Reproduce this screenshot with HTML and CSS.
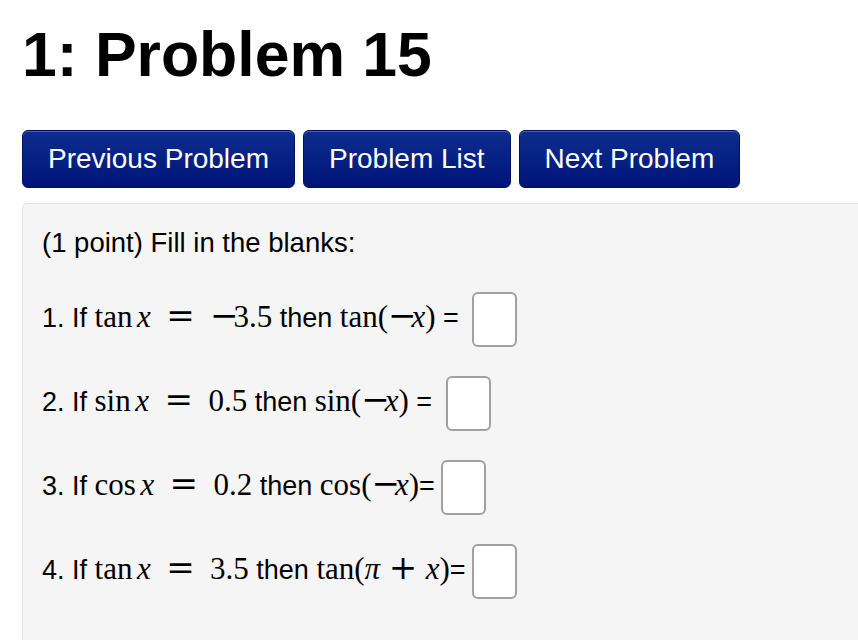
FILE: index.html
```html
<!DOCTYPE html>
<html lang="en">
<head>
    <meta charset="UTF-8">
    <meta name="viewport" content="width=device-width, initial-scale=1.0">
    <title>1: Problem 15</title>
    <link rel="stylesheet" href="styles.css">
</head>
<body>
    <h1 class="title">1: Problem 15</h1>
    <div class="nav-buttons">
        <button class="nav-btn">Previous Problem</button>
        <button class="nav-btn">Problem List</button>
        <button class="nav-btn">Next Problem</button>
    </div>
    <div class="problem">
        <p class="intro">(1 point) Fill in the blanks:</p>
        <p class="item">1. If <span class="math">tan<i class="var">x</i><span class="rel">=</span><span class="neg">−</span>3.5</span> then <span class="math">tan(<span class="neg">−</span><i>x</i>)</span> = <input type="text" class="answer"></p>
        <p class="item">2. If <span class="math">sin<i class="var">x</i><span class="rel">=</span>0.5</span> then <span class="math">sin(<span class="neg">−</span><i>x</i>)</span> = <input type="text" class="answer"></p>
        <p class="item">3. If <span class="math">cos<i class="var">x</i><span class="rel">=</span>0.2</span> then <span class="math">cos(<span class="neg">−</span><i>x</i>)</span>=<input type="text" class="answer"></p>
        <p class="item">4. If <span class="math">tan<i class="var">x</i><span class="rel">=</span>3.5</span> then <span class="math">tan(<i>π</i><span class="bin">+</span><i>x</i>)</span>=<input type="text" class="answer"></p>
    </div>
</body>
</html>
```

FILE: styles.css
```css
body {
    margin: 0;
    padding: 0 0 0 22px;
    font-family: "Liberation Sans", Arial, Helvetica, sans-serif;
    color: black;
    background-color: white;
    overflow: hidden;
}
.title {
    font-size: 62.5px;
    font-weight: bold;
    line-height: 71px;
    margin: 19px 0 0 0;
}
.nav-buttons {
    display: flex;
    gap: 8px;
    margin-top: 40px;
}
.nav-btn {
    height: 58px;
    padding: 0 25px;
    font-family: "Liberation Sans", Arial, Helvetica, sans-serif;
    font-size: 28px;
    color: white;
    background: linear-gradient(#0c2d8e, #001478);
    border: 1px solid #001060;
    border-radius: 6px;
    box-shadow: inset 0 1px 0 rgba(255, 255, 255, 0.25);
    cursor: pointer;
}
.problem {
    margin-top: 15px;
    width: 900px;
    height: 480px;
    padding: 21px 19px;
    background-color: #f5f5f5;
    border: 1px solid #e3e3e3;
    border-radius: 5px;
    box-sizing: border-box;
}
.intro {
    font-size: 27.5px;
    line-height: 36px;
    margin: 0 0 31px;
}
.item {
    font-size: 27px;
    line-height: 31px;
    margin: 0 0 29px;
}
.math {
    font-family: "Liberation Serif", "Times New Roman", serif;
    font-size: 31px;
}
.var {
    margin-left: 0.15em;
}
.rel,
.bin,
.neg {
    font-family: "DejaVu Serif", serif;
    font-style: normal;
    font-size: 1.1em;
}
.rel {
    margin: 0 0.45em;
}
.bin {
    margin: 0 0.25em;
}
.neg {
    letter-spacing: -0.15em;
}
.answer {
    width: 45px;
    height: 55px;
    box-sizing: border-box;
    vertical-align: middle;
    border: 2px solid #a0a0a0;
    border-radius: 6px;
    background-color: white;
    padding: 0;
    margin: 0 0 0 6px;
}
```
